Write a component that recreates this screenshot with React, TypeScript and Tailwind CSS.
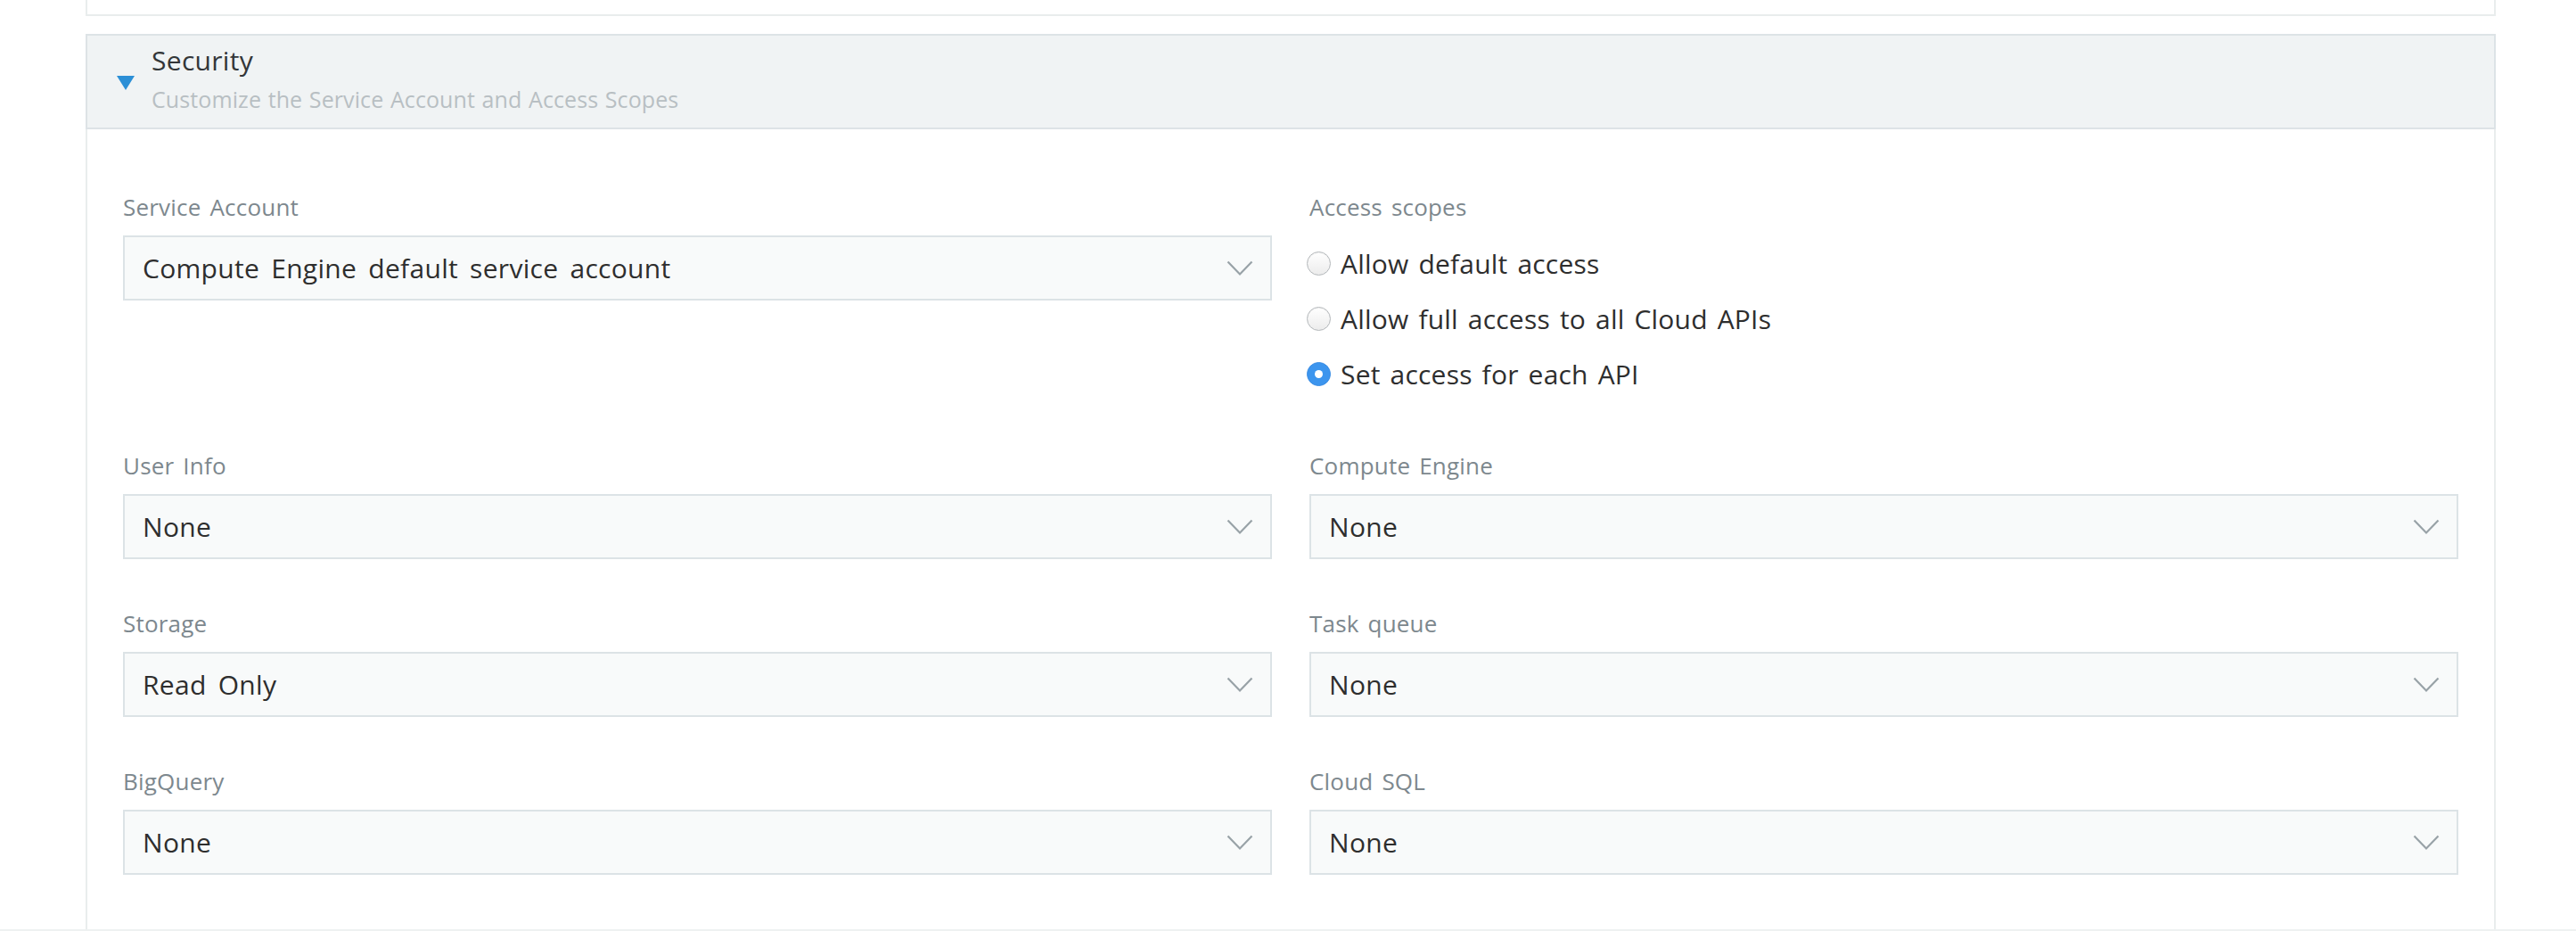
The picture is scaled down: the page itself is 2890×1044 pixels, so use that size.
import React from 'react'

const leftFields = [
  { label: 'User Info', value: 'None' },
  { label: 'Storage', value: 'Read Only' },
  { label: 'BigQuery', value: 'None' },
]

const rightFields = [
  { label: 'Compute Engine', value: 'None' },
  { label: 'Task queue', value: 'None' },
  { label: 'Cloud SQL', value: 'None' },
]

const scopes = [
  { label: 'Allow default access', checked: false },
  { label: 'Allow full access to all Cloud APIs', checked: false },
  { label: 'Set access for each API', checked: true },
]

function Chevron() {
  return (
    <svg width="30" height="18" viewBox="0 0 30 18" className="shrink-0">
      <polyline points="1.5,1.5 15,15.5 28.5,1.5" fill="none" stroke="#98a2a7" strokeWidth="2.2" />
    </svg>
  )
}

function FieldLabel({ children }: { children: React.ReactNode }) {
  return (
    <div className="text-[26px] leading-[32px] text-[#7d888e] tracking-[0.2px] [word-spacing:3px]">
      {children}
    </div>
  )
}

function Select({ value }: { value: string }) {
  return (
    <div className="mt-[16px] h-[73px] border-2 border-[#dce3e6] bg-[#f8fafa] flex items-center pl-[20px] pr-[19px]">
      <span className="flex-1 text-[30px] text-[#2e2e2e] tracking-[0.3px] [word-spacing:5px]">{value}</span>
      <Chevron />
    </div>
  )
}

function Field({ label, value }: { label: string; value: string }) {
  return (
    <div>
      <FieldLabel>{label}</FieldLabel>
      <Select value={value} />
    </div>
  )
}

function Radio({ checked }: { checked: boolean }) {
  if (checked) {
    return (
      <span className="w-[27px] h-[27px] rounded-full bg-[#3c95ee] border border-[#3a8de4] flex items-center justify-center shrink-0">
        <span className="w-[9px] h-[9px] rounded-full bg-white" />
      </span>
    )
  }
  return (
    <span className="w-[27px] h-[27px] rounded-full border-[1.5px] border-[#b3b7ba] bg-gradient-to-b from-[#ffffff] to-[#ececec] shadow-[inset_0_1px_1px_rgba(0,0,0,0.06)] shrink-0" />
  )
}

export default function App() {
  return (
    <div className="h-[1044px] overflow-hidden bg-white flex flex-col font-['Open_Sans',sans-serif]">
      <div className="flex-1 flex flex-col ml-[96px] w-[2704px] min-h-0">
        {/* previous section (cut off above) */}
        <div className="h-[18px] border-x-2 border-b-2 border-[#e9eded] shrink-0" />

        {/* Security section */}
        <div className="mt-[20px] flex-1 flex flex-col border-x-2 border-[#e9eded] min-h-0">
          <div className="-mx-[2px] h-[107px] border-2 border-[#dde3e6] bg-[#f0f3f4] flex items-center shrink-0">
            <svg width="20" height="16" viewBox="0 0 20 16" className="ml-[33px] mt-[2px] shrink-0">
              <polygon points="0,0 20,0 10,16" fill="#2b8fd6" />
            </svg>
            <div className="ml-[19px] self-start pt-[8px]">
              <div className="text-[30px] leading-[40px] text-[#333638] tracking-[0.3px]">Security</div>
              <div className="mt-[6px] text-[25px] leading-[34px] text-[#b8bfc3] tracking-[0.1px] [word-spacing:1px]">
                Customize the Service Account and Access Scopes
              </div>
            </div>
          </div>

          <div className="px-[40px] pt-[71px] grid grid-cols-2 gap-x-[42px] gap-y-[56px] content-start">
            <Field label="Service Account" value="Compute Engine default service account" />

            <div>
              <FieldLabel>Access scopes</FieldLabel>
              <div className="mt-[16px] flex flex-col">
                {scopes.map((s) => (
                  <div key={s.label} className="h-[62px] flex items-center -ml-[3px]">
                    <Radio checked={s.checked} />
                    <span className="ml-[11px] text-[30px] text-[#2e2e2e] tracking-[0.2px] [word-spacing:3px]">
                      {s.label}
                    </span>
                  </div>
                ))}
              </div>
            </div>

            {leftFields.map((f, i) => (
              <React.Fragment key={f.label}>
                <Field label={f.label} value={f.value} />
                <Field label={rightFields[i].label} value={rightFields[i].value} />
              </React.Fragment>
            ))}
          </div>
        </div>
      </div>
      <div className="h-[2px] bg-[#eef1f1] shrink-0" />
    </div>
  )
}
